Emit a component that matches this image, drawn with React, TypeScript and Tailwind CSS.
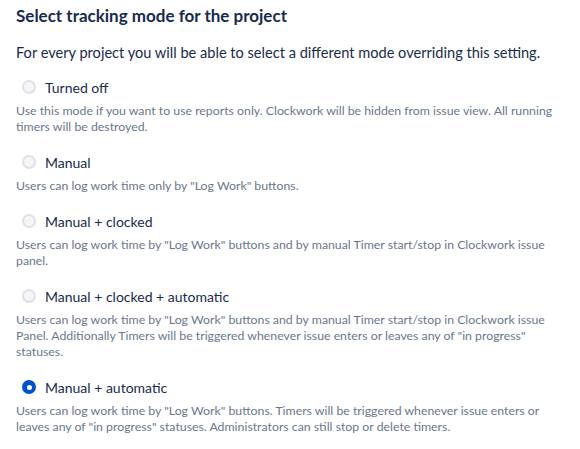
import { useState } from "react";

type Mode = {
  id: string;
  label: string;
  description: string;
};

const modes: Mode[] = [
  {
    id: "off",
    label: "Turned off",
    description:
      "Use this mode if you want to use reports only. Clockwork will be hidden from issue view. All running timers will be destroyed.",
  },
  {
    id: "manual",
    label: "Manual",
    description: 'Users can log work time only by "Log Work" buttons.',
  },
  {
    id: "clocked",
    label: "Manual + clocked",
    description:
      'Users can log work time by "Log Work" buttons and by manual Timer start/stop in Clockwork issue panel.',
  },
  {
    id: "clocked-auto",
    label: "Manual + clocked + automatic",
    description:
      'Users can log work time by "Log Work" buttons and by manual Timer start/stop in Clockwork issue Panel. Additionally Timers will be triggered whenever issue enters or leaves any of "in progress" statuses.',
  },
  {
    id: "auto",
    label: "Manual + automatic",
    description:
      'Users can log work time by "Log Work" buttons. Timers will be triggered whenever issue enters or leaves any of "in progress" statuses. Administrators can still stop or delete timers.',
  },
];

function Radio({ checked }: { checked: boolean }) {
  if (checked) {
    return (
      <span className="flex h-[14px] w-[14px] items-center justify-center rounded-full bg-[#0052cc]">
        <span className="h-[5px] w-[5px] rounded-full bg-white" />
      </span>
    );
  }
  return <span className="h-[14px] w-[14px] rounded-full border-2 border-[#dfe1e6] bg-[#f4f5f7]" />;
}

export default function App() {
  const [selected, setSelected] = useState("auto");

  return (
    <div className="min-h-screen bg-white px-4 pt-[4px] text-[#172b4d] font-['Lato',sans-serif]">
      <h2 className="text-[17px] font-bold leading-6">Select tracking mode for the project</h2>
      <p className="mt-[15px] text-[14.6px] leading-5">
        For every project you will be able to select a different mode overriding this setting.
      </p>

      <div className="mt-[12px] flex flex-col gap-[15px]">
        {modes.map((mode) => (
          <div key={mode.id}>
            <label
              className="flex h-6 cursor-pointer items-center pl-[6px]"
              onClick={() => setSelected(mode.id)}
            >
              <Radio checked={selected === mode.id} />
              <span className="ml-[9px] text-[14px]">{mode.label}</span>
            </label>
            <p className="mt-[4px] text-[12.3px] leading-4 text-[#6b778c]">{mode.description}</p>
          </div>
        ))}
      </div>
    </div>
  );
}
